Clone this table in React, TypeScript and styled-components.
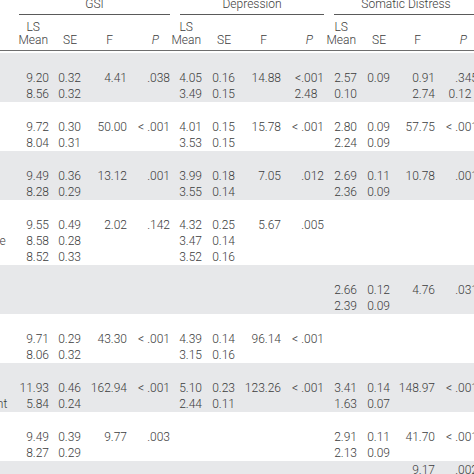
import styled, { createGlobalStyle } from "styled-components";

const COLUMNS = "47px 35px 32px 46px 43px 32px 33px 46px 43px 33px 33px 45px 43px";
const P_COLUMNS = [4, 8, 12];
const E = ["", "", "", "", "", "", "", "", "", "", "", ""];

type Group = { shade: boolean; rows: string[][] };

const GROUPS: Group[] = [
	{
		shade: true,
		rows: [
			["Sex", ...E],
			["Yes", "9.20", "0.32", "4.41", ".038", "4.05", "0.16", "14.88", "<.001", "2.57", "0.09", "0.91", ".345"],
			["No", "8.56", "0.32", "", "", "3.49", "0.15", "", "2.48", "0.10", "", "2.74", "0.12"],
		],
	},
	{
		shade: false,
		rows: [
			["Pain", ...E],
			["Yes", "9.72", "0.30", "50.00", "< .001", "4.01", "0.15", "15.78", "< .001", "2.80", "0.09", "57.75", "< .001"],
			["No", "8.04", "0.31", "", "", "3.53", "0.15", "", "", "2.24", "0.09", "", ""],
		],
	},
	{
		shade: true,
		rows: [
			["Work", ...E],
			["Yes", "9.49", "0.36", "13.12", ".001", "3.99", "0.18", "7.05", ".012", "2.69", "0.11", "10.78", ".001"],
			["No", "8.28", "0.29", "", "", "3.55", "0.14", "", "", "2.36", "0.09", "", ""],
		],
	},
	{
		shade: false,
		rows: [
			["Age", ...E],
			["Low", "9.55", "0.49", "2.02", ".142", "4.32", "0.25", "5.67", ".005", "", "", "", ""],
			["Female", "8.58", "0.28", "", "", "3.47", "0.14", "", "", "", "", "", ""],
			["High", "8.52", "0.33", "", "", "3.52", "0.16", "", "", "", "", "", ""],
		],
	},
	{
		shade: true,
		rows: [
			["Diet", ...E],
			["Yes", "", "", "", "", "", "", "", "", "2.66", "0.12", "4.76", ".031"],
			["No", "", "", "", "", "", "", "", "", "2.39", "0.09", "", ""],
		],
	},
	{
		shade: false,
		rows: [
			["Sleep", ...E],
			["Poor", "9.71", "0.29", "43.30", "< .001", "4.39", "0.14", "96.14", "< .001", "", "", "", ""],
			["Good", "8.06", "0.32", "", "", "3.15", "0.16", "", "", "", "", "", ""],
		],
	},
	{
		shade: true,
		rows: [
			["Fear", ...E],
			["Yes", "11.93", "0.46", "162.94", "< .001", "5.10", "0.23", "123.26", "< .001", "3.41", "0.14", "148.97", "< .001"],
			["Present", "5.84", "0.24", "", "", "2.44", "0.11", "", "", "1.63", "0.07", "", ""],
		],
	},
	{
		shade: false,
		rows: [
			["Rest", ...E],
			["Yes", "9.49", "0.39", "9.77", ".003", "", "", "", "", "2.91", "0.11", "41.70", "< .001"],
			["No", "8.27", "0.29", "", "", "", "", "", "", "2.13", "0.09", "", ""],
		],
	},
	{
		shade: true,
		rows: [
			["Mood", "", "", "", "", "", "", "", "", "", "", "9.17", ".002"],
			["Yes", ...E],
		],
	},
];

const SUB_HEADS = [
	{ key: "mean", pad: 1 },
	{ key: "se", pad: 4 },
	{ key: "f", pad: 14 },
	{ key: "p", pad: 11 },
];

const App: React.FC = () => {
	return (
		<>
			<GlobalStyle />
			<Table>
				<TitleRow>
					<GroupTitle $col={2} $inset={5}>GSI</GroupTitle>
					<GroupTitle $col={6} $inset={10}>Depression</GroupTitle>
					<GroupTitle $col={10} $inset={10}>Somatic Distress</GroupTitle>
				</TitleRow>
				<HeadRow>
					<span />
					{[0, 1, 2].map((g) =>
						SUB_HEADS.map((h) => (
							<HeadCell key={`${g}-${h.key}`} $pad={h.pad} $italic={h.key === "p"}>
								{h.key === "mean" && (
									<Stack>
										LS
										<br />
										Mean
									</Stack>
								)}
								{h.key === "se" && "SE"}
								{h.key === "f" && "F"}
								{h.key === "p" && "P"}
							</HeadCell>
						))
					)}
				</HeadRow>
				<Body>
					{GROUPS.map((group, gi) => (
						<GroupBlock key={gi} $shade={group.shade}>
							{group.rows.map((row, ri) => (
								<Row key={ri}>
									<Label>{row[0]}</Label>
									{row.slice(1).map((value, ci) => (
										<Num
											key={ci}
											$pad={P_COLUMNS.includes(ci + 1) && /\.\d\d$/.test(value)}
										>
											{value}
										</Num>
									))}
								</Row>
							))}
						</GroupBlock>
					))}
				</Body>
			</Table>
		</>
	);
};
export default App;

const GlobalStyle = createGlobalStyle`
	html, body {
		margin: 0;
		padding: 0;
		overflow: hidden;
		background: #ffffff;
	}
	body {
		font-family: Roboto, "Liberation Sans", Arial, sans-serif;
		font-weight: 300;
		font-size: 12px;
		color: #3c3c3c;
	}
`;

const Table = styled.div`
	width: 511px;
	margin-left: -33px;
	margin-top: -2px;
`;

const TitleRow = styled.div`
	display: grid;
	grid-template-columns: ${COLUMNS};
`;

const GroupTitle = styled.div<{ $col: number; $inset: number }>`
	grid-column: ${(p) => p.$col} / span 4;
	margin-left: ${(p) => p.$inset}px;
	height: 16px;
	line-height: 13px;
	text-align: center;
	border-bottom: 1px solid #5a5a5a;
`;

const HeadRow = styled.div`
	display: grid;
	grid-template-columns: ${COLUMNS};
	padding: 6px 0 3px;
	border-bottom: 1px solid #6e6e6e;
	line-height: 13px;
`;

const HeadCell = styled.div<{ $pad: number; $italic?: boolean }>`
	align-self: end;
	display: flex;
	justify-content: flex-end;
	padding-right: ${(p) => p.$pad}px;
	font-style: ${(p) => (p.$italic ? "italic" : "normal")};
`;

const Stack = styled.div`
	text-align: center;
`;

const Body = styled.div`
	padding-top: 2px;
`;

const GroupBlock = styled.div<{ $shade: boolean }>`
	padding: 0.5px 0;
	background: ${(p) => (p.$shade ? "#e7e8ea" : "#ffffff")};
`;

const Row = styled.div`
	display: grid;
	grid-template-columns: ${COLUMNS};
	height: 16px;
	line-height: 16px;
`;

const Label = styled.div`
	white-space: nowrap;
	overflow: hidden;
`;

const Num = styled.div<{ $pad: boolean }>`
	text-align: right;
	white-space: nowrap;
	padding-right: ${(p) => (p.$pad ? 6.7 : 0)}px;
`;
